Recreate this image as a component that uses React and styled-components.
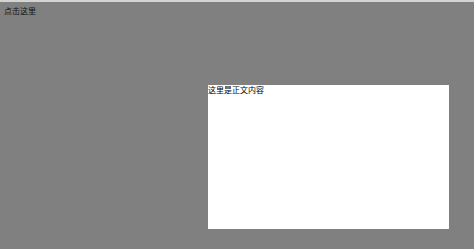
import React from "react";
import styled, { createGlobalStyle } from "styled-components";

const Global = createGlobalStyle`
  html, body { margin: 0; padding: 0; background: #d4d4d4; }
  body { font-family: "Noto Sans CJK SC", "Noto Sans", sans-serif; }
`;

const Overlay = styled.div`
  position: fixed;
  top: 2px;
  left: 0;
  right: 0;
  bottom: 0;
  background: #808080;
`;

const Trigger = styled.div`
  padding: 3px 4px;
  font-size: 8px;
  line-height: 12px;
  color: #111;
`;

const Modal = styled.div`
  position: absolute;
  left: 208px;
  top: 83px;
  width: 241px;
  height: 144px;
  background: #ffffff;
  font-size: 8px;
  line-height: 10px;
  color: #000;
`;

export default function App() {
  return (
    <>
      <Global />
      <Overlay>
        <Trigger>点击这里</Trigger>
        <Modal>这里是正文内容</Modal>
      </Overlay>
    </>
  );
}
